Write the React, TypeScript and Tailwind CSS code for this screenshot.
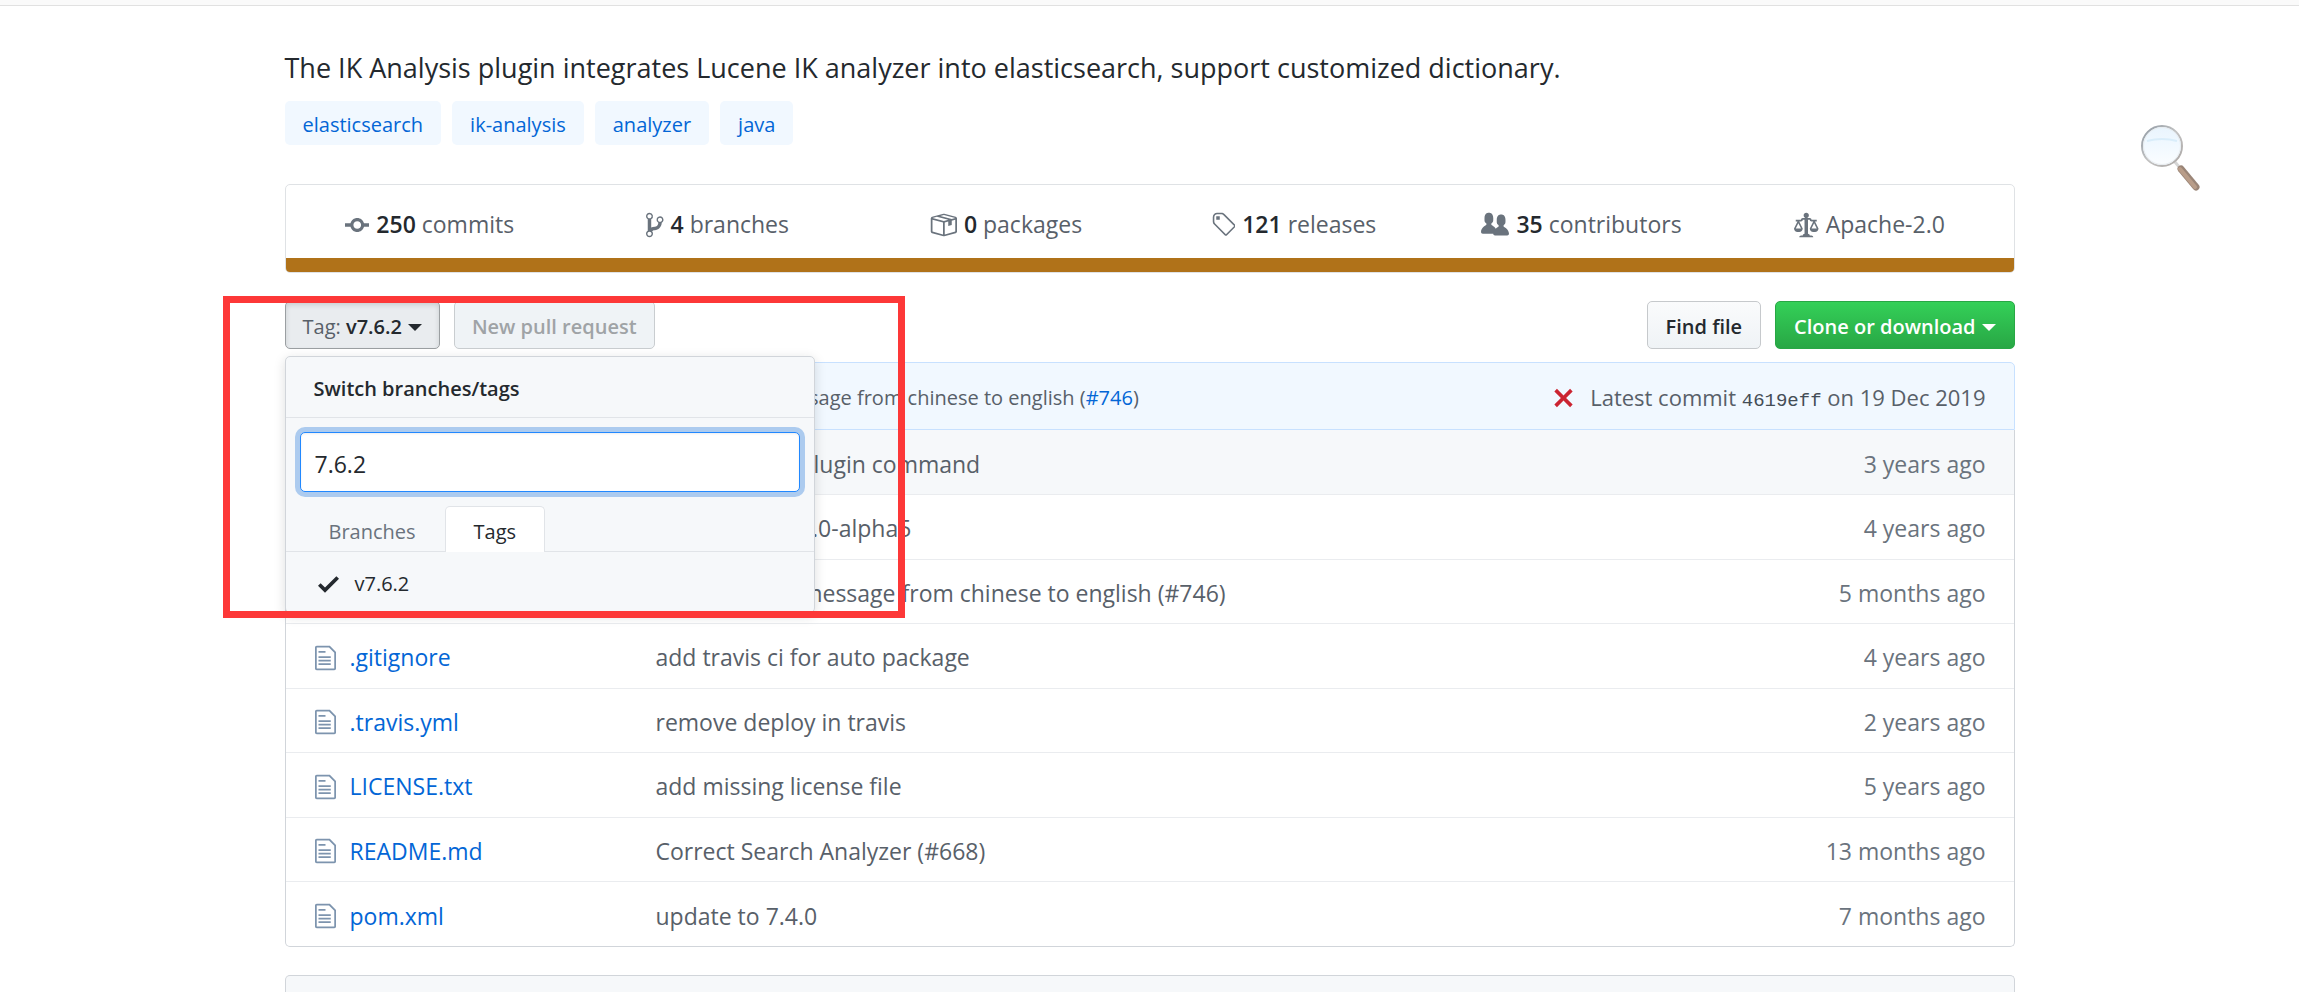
import { useState } from "react";

// 16-unit-high glyphs, keyed by name: [width, path]
const ICONS = {
  commit: [14, "M10.86 7c-.45-1.72-2-3-3.86-3-1.86 0-3.41 1.28-3.86 3H0v2h3.14c.45 1.72 2 3 3.86 3 1.86 0 3.41-1.28 3.86-3H14V7h-3.14zM7 10.2c-1.22 0-2.2-.98-2.2-2.2 0-1.22.98-2.2 2.2-2.2 1.22 0 2.2.98 2.2 2.2 0 1.22-.98 2.2-2.2 2.2z"],
  branch: [10, "M10 5c0-1.11-.89-2-2-2a1.993 1.993 0 00-1 3.72v.3c-.02.52-.23.98-.63 1.38-.4.4-.86.61-1.38.63-.83.02-1.48.16-2 .45V4.72a1.993 1.993 0 00-1-3.72C.88 1 0 1.89 0 3a2 2 0 001 1.72v6.56c-.59.35-1 .99-1 1.72 0 1.11.89 2 2 2 1.11 0 2-.89 2-2 0-.53-.2-1-.53-1.36.09-.06.48-.41.59-.47.25-.11.56-.17.94-.17 1.05-.05 1.95-.45 2.75-1.25S8.95 7.77 9 6.73h-.02C9.59 6.37 10 5.73 10 5zM2 1.8c.66 0 1.2.55 1.2 1.2 0 .65-.55 1.2-1.2 1.2C1.35 4.2.8 3.65.8 3c0-.65.55-1.2 1.2-1.2zm0 12.41c-.66 0-1.2-.55-1.2-1.2 0-.65.55-1.2 1.2-1.2.65 0 1.2.55 1.2 1.2 0 .65-.55 1.2-1.2 1.2zm6-8c-.66 0-1.2-.55-1.2-1.2 0-.65.55-1.2 1.2-1.2.65 0 1.2.55 1.2 1.2 0 .65-.55 1.2-1.2 1.2z"],
  pkg: [16, "M1 4.27v7.47c0 .45.3.84.75.97l6.5 1.73c.16.05.34.05.5 0l6.5-1.73c.45-.13.75-.52.75-.97V4.27c0-.45-.3-.84-.75-.97l-6.5-1.74a1.4 1.4 0 00-.5 0L1.75 3.3c-.45.13-.75.52-.75.97zm7 9.09l-6-1.59V5l6 1.61v6.75zM2 4l2.5-.67L11 5.06l-2.5.67L2 4zm13 7.77l-6 1.59V6.61l2-.55V8.5l2-.53V5.53L15 5v6.77zm-2-7.24L6.5 2.8l2-.53L15 4l-2 .53z"],
  tag: [14, "M7.73 1.73C7.26 1.26 6.62 1 5.96 1H3.5C2.13 1 1 2.13 1 3.5v2.47c0 .66.27 1.3.73 1.77l6.06 6.06c.39.39 1.02.39 1.41 0l4.59-4.59a.996.996 0 000-1.41L7.73 1.73zM2.38 7.09c-.31-.3-.47-.7-.47-1.13V3.5c0-.88.72-1.59 1.59-1.59h2.47c.42 0 .83.16 1.13.47l6.14 6.13-4.73 4.73-6.13-6.15zM3.01 3h2v2H3V3h.01z"],
  people: [16, "M16 12.999c0 .439-.45 1-1 1H7.995c-.539 0-.994-.447-.995-.999H1c-.54 0-1-.561-1-1 0-2.634 3-4 3-4s.229-.409 0-1c-.841-.621-1.058-.59-1-3 .058-2.419 1.367-3 2.5-3s2.442.58 2.5 3c.058 2.41-.159 2.379-1 3-.229.59 0 1 0 1s1.549.711 2.42 2.088C9.196 9.369 10 8.999 10 8.999s.229-.409 0-1c-.841-.62-1.058-.59-1-3 .058-2.419 1.367-3 2.5-3s2.437.581 2.495 3c.059 2.41-.158 2.38-1 3-.229.59 0 1 0 1s3.005 1.366 3.005 4z"],
  law: [14, "M7 4c-.83 0-1.5-.67-1.5-1.5S6.17 1 7 1s1.5.67 1.5 1.5S7.83 4 7 4zm7 6c0 1.11-.89 2-2 2h-1c-1.11 0-2-.89-2-2l2-4h-1c-.55 0-1-.45-1-1H8v8c.42 0 1 .45 1 1h1c.42 0 1 .45 1 1H3c0-.55.58-1 1-1h1c0-.55.58-1 1-1h.03L6 5H5c0 .55-.45 1-1 1H3l2 4c0 1.11-.89 2-2 2H2c-1.11 0-2-.89-2-2l2-4H1V5h3c0-.55.45-1 1-1h4c.55 0 1 .45 1 1h3v1h-1l2 4zM2.5 7L1 10h3L2.5 7zM13 10l-1.5-3-1.5 3h3z"],
  file: [12, "M6 5H2V4h4v1zM2 8h7V7H2v1zm0 2h7V9H2v1zm0 2h7v-1H2v1zm10-7.5V14c0 .55-.45 1-1 1H1c-.55 0-1-.45-1-1V2c0-.55.45-1 1-1h7.5L12 4.5zM11 5L8 2H1v12h10V5z"],
  folder: [14, "M13 4H7V3c0-.66-.31-1-1-1H1c-.55 0-1 .45-1 1v10c0 .55.45 1 1 1h12c.55 0 1-.45 1-1V5c0-.55-.45-1-1-1zM6 4H1V3h5v1z"],
  x: [12, "M7.48 8l3.75 3.75-1.48 1.48L6 9.48l-3.75 3.75-1.48-1.48L4.52 8 .77 4.25l1.48-1.48L6 6.52l3.75-3.75 1.48 1.48L7.48 8z"],
  check: [12, "M12 5l-8 8-4-4 1.5-1.5L4 10l6.5-6.5L12 5z"],
} as const;

type IconName = keyof typeof ICONS;

const TOPICS = ["elasticsearch", "ik-analysis", "analyzer", "java"];

const STATS: { icon: IconName; count?: string; label: string }[] = [
  { icon: "commit", count: "250", label: "commits" },
  { icon: "branch", count: "4", label: "branches" },
  { icon: "pkg", count: "0", label: "packages" },
  { icon: "tag", count: "121", label: "releases" },
  { icon: "people", count: "35", label: "contributors" },
  { icon: "law", label: "Apache-2.0" },
];

const FILES: { icon: IconName; name: string; message: string; age: string }[] = [
  { icon: "folder", name: "config", message: "update docs, plugin command", age: "3 years ago" },
  { icon: "folder", name: "licenses", message: "updated to 5.0.0-alpha5", age: "4 years ago" },
  { icon: "folder", name: "src", message: "Update error message from chinese to english (#746)", age: "5 months ago" },
  { icon: "file", name: ".gitignore", message: "add travis ci for auto package", age: "4 years ago" },
  { icon: "file", name: ".travis.yml", message: "remove deploy in travis", age: "2 years ago" },
  { icon: "file", name: "LICENSE.txt", message: "add missing license file", age: "5 years ago" },
  { icon: "file", name: "README.md", message: "Correct Search Analyzer (#668)", age: "13 months ago" },
  { icon: "file", name: "pom.xml", message: "update to 7.4.0", age: "7 months ago" },
];

function Icon({ name, className = "" }: { name: IconName; className?: string }) {
  const [width, d] = ICONS[name];
  return (
    <svg
      viewBox={`0 0 ${width} 16`}
      className={`h-7 w-auto shrink-0 fill-current ${className}`}
      aria-hidden="true"
    >
      <path fillRule="evenodd" d={d} />
    </svg>
  );
}

function Caret() {
  return (
    <svg viewBox="0 0 14 7" className="h-[7px] w-[14px] fill-current" aria-hidden="true">
      <path d="M0 0h14L7 7z" />
    </svg>
  );
}

function RefMenu() {
  const [query, setQuery] = useState("7.6.2");
  const [tab, setTab] = useState("Tags");

  return (
    <div className="absolute left-0 top-[55px] z-10 w-[530px] rounded-[5px] border border-[#d1d5da] bg-[#f6f8fa] text-[20px] font-normal shadow-[0_3px_12px_rgba(27,31,35,0.15)]">
      <h2 className="flex h-[61px] items-center border-b border-[#e1e4e8] pl-7 pt-1 font-semibold text-[#24292e]">
        Switch branches/tags
      </h2>
      <div className="px-3.5 pt-3.5">
        <input
          type="text"
          aria-label="Find a tag"
          value={query}
          onChange={(e) => setQuery(e.target.value)}
          className="h-[60px] w-full rounded-[5px] border border-[#2188ff] bg-white px-3.5 pt-1 text-[23px] text-[#24292e] shadow-[inset_0_1px_2px_rgba(27,31,35,0.075),0_0_0_5px_#accbef] outline-none"
        />
      </div>
      <div role="tablist" className="mt-3.5 flex h-[46px] border-b border-[#e1e4e8] pl-3.5">
        {["Branches", "Tags"].map((name) => (
          <button
            key={name}
            type="button"
            role="tab"
            aria-selected={tab === name}
            onClick={() => setTab(name)}
            className={`h-[46px] rounded-t-[5px] border border-b-0 px-7 pt-1 ${
              tab === name
                ? "border-[#e1e4e8] bg-white text-[#24292e]"
                : "border-transparent text-[#6a737d]"
            }`}
          >
            {name}
          </button>
        ))}
      </div>
      <a href="#v7.6.2" className="flex h-[60px] items-center gap-4 pl-8 pt-1 text-[#24292e]">
        <Icon name="check" />
        v7.6.2
      </a>
    </div>
  );
}

function Magnifier() {
  return (
    <svg viewBox="0 0 66 72" className="absolute right-[96px] top-[122px] h-[72px] w-[66px]" aria-hidden="true">
      <defs>
        <linearGradient id="lens" x1="0" y1="0" x2="0" y2="1">
          <stop offset="0" stopColor="#e9f4fd" />
          <stop offset="0.4" stopColor="#eff8ff" />
          <stop offset="1" stopColor="#fbfdff" />
        </linearGradient>
        <linearGradient id="rim" x1="0" y1="0" x2="1" y2="1">
          <stop offset="0" stopColor="#8f99a3" />
          <stop offset="0.5" stopColor="#c3c3c3" />
          <stop offset="1" stopColor="#a9a4a2" />
        </linearGradient>
      </defs>
      <path d="M38 40l5 6" stroke="#d6d6d6" strokeWidth="3" />
      <path d="M44 47l15 18" stroke="#9a8577" strokeWidth="7" strokeLinecap="round" />
      <path d="M43 47l15 18" stroke="#b99d89" strokeWidth="4" strokeLinecap="round" />
      <circle cx="25" cy="24" r="20" fill="url(#lens)" stroke="url(#rim)" strokeWidth="2" />
      <circle cx="25" cy="24" r="18.5" fill="none" stroke="#e8edf1" strokeWidth="1" />
      <path d="M10 19q15-4 30 0" fill="none" stroke="#d9edfa" strokeWidth="2" />
    </svg>
  );
}

export default function App() {
  return (
    <div className="relative flex min-h-screen flex-col overflow-hidden bg-white font-['Open_Sans',sans-serif] text-[#24292e]">
      <div className="h-1.5 border-b border-[#e1e1e1] bg-[#fafafa]" />
      <Magnifier />

      <main className="relative mx-auto flex w-full max-w-[1730px] flex-1 flex-col">
        <p className="mt-11 text-[27px] leading-9">
          The IK Analysis plugin integrates Lucene IK analyzer into elasticsearch, support customized dictionary.
        </p>

        <div className="mt-[15px] flex gap-[11px]">
          {TOPICS.map((topic) => (
            <a
              key={topic}
              href={`#${topic}`}
              className="flex h-11 items-center rounded-[5px] bg-[#f1f8ff] px-[18px] pt-1 text-[20px] text-[#0366d6]"
            >
              {topic}
            </a>
          ))}
        </div>

        <div className="mt-[39px] overflow-hidden rounded-[5px] border border-[#dfe2e5]">
          <ul className="flex h-[73px] text-[23px] text-[#586069]">
            {STATS.map((stat) => (
              <li key={stat.label} className="flex-1">
                <a href={`#${stat.label}`} className="flex h-full items-center justify-center gap-[7px] pt-1.5">
                  <Icon name={stat.icon} className="text-[#6a737d]" />
                  <span>
                    {stat.count && <span className="font-semibold text-[#24292e]">{stat.count} </span>}
                    {stat.label}
                  </span>
                </a>
              </li>
            ))}
          </ul>
          <div className="h-3.5 bg-[#b07219]" />
        </div>

        <div className="mt-7 flex h-12 text-[20px] font-semibold">
          <div className="relative">
            <button
              type="button"
              aria-expanded="true"
              className="flex h-12 items-center gap-1.5 rounded-[5px] border border-[#9b9fa2] bg-[#e9ecef] px-[17px] pt-1 shadow-[inset_0_3px_5px_rgba(27,31,35,0.15)]"
            >
              <span>
                <span className="font-normal text-[#586069]">Tag:</span> v7.6.2
              </span>
              <Caret />
            </button>
            <RefMenu />
          </div>
          <button
            type="button"
            disabled
            className="ml-3.5 rounded-[5px] border border-[#c9cdd0] bg-[#eff3f6] px-[17px] pt-1 text-[#9fa3a6]"
          >
            New pull request
          </button>
          <button
            type="button"
            className="ml-auto rounded-[5px] border border-[#c6c9cc] bg-linear-to-b from-[#fafbfc] to-[#eff3f6] px-[18px] pt-1"
          >
            Find file
          </button>
          <button
            type="button"
            className="ml-3.5 flex items-center gap-1.5 rounded-[5px] border border-[#28a745] bg-linear-to-b from-[#34d058] to-[#28a745] px-[18px] pt-1 text-white"
          >
            Clone or download
            <Caret />
          </button>
        </div>

        <section className="mt-[13px]">
          <div className="flex h-[68px] items-center rounded-t-[5px] border border-[#c8e1ff] bg-[#f1f8ff] px-7 pt-1 text-[20px] text-[#586069]">
            <p className="flex-1 pl-10">
              <strong className="font-semibold">medcl</strong> Update the elasticsearch ik exception message from chinese to english (
              <a href="#746" className="text-[#0366d6]">#746</a>)
            </p>
            <Icon name="x" className="mr-4 text-[#cb2431]" />
            <p className="text-[22px]">
              Latest commit{" "}
              <a href="#4619eff" className="font-['Liberation_Mono',monospace] text-[19px] text-[#444d56]">4619eff</a>{" "}
              on 19 Dec 2019
            </p>
          </div>
          <div className="rounded-b-[5px] border border-t-0 border-[#d1d5da]">
            <table className="w-full text-[23px]">
              <tbody>
                {FILES.map((file) => (
                  <tr
                    key={file.name}
                    className="h-16 border-b border-[#eaecef] first:bg-[#f6f8fa] last:border-b-0 even:h-[65px]"
                  >
                    <td className="w-[370px] pl-[29px] pt-1">
                      <a href={`#${file.name}`} className="flex items-center gap-3.5 text-[#0366d6]">
                        <Icon name={file.icon} className="text-[#7d94ae]" />
                        {file.name}
                      </a>
                    </td>
                    <td className="pt-1 text-[#586069]">{file.message}</td>
                    <td className="pr-7 pt-1 text-right text-[#6a737d]">{file.age}</td>
                  </tr>
                ))}
              </tbody>
            </table>
          </div>
        </section>

        <div className="mt-7 min-h-[18px] flex-1 rounded-t-[5px] border border-b-0 border-[#d1d5da] bg-[#f6f8fa]" />

        {/* highlight around the tag picker */}
        <div className="pointer-events-none absolute -left-[62px] top-[290px] z-20 h-[322px] w-[682px] border-7 border-[#fd3838]" />
      </main>
    </div>
  );
}
